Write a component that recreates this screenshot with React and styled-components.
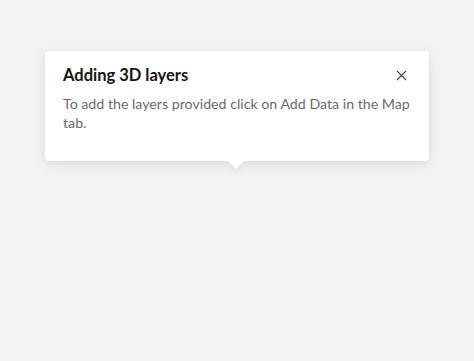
import React from "react";
import styled, { createGlobalStyle } from "styled-components";

const Global = createGlobalStyle`
  html, body { margin: 0; padding: 0; background: #f3f3f3; }
  body { font-family: "Lato", "Open Sans", sans-serif; }
  #root { min-height: 361px; }
`;

const Page = styled.div`
  min-height: 361px;
  box-sizing: border-box;
  display: flex;
  flex-direction: column;
  align-items: center;
  padding-top: 51px;
  background: #f3f3f3;
`;

const Popover = styled.div`
  position: relative;
  width: 384px;
  height: 110px;
  box-sizing: border-box;
  background: #ffffff;
  border-radius: 4px;
  box-shadow: 0 4px 16px rgba(0, 0, 0, 0.08), 0 2px 6px rgba(0, 0, 0, 0.04);
  padding: 14px 18px 0 18px;
  display: flex;
  flex-direction: column;
  gap: 9px;
  &::after {
    content: "";
    position: absolute;
    left: 50%;
    bottom: -6px;
    width: 10px;
    height: 10px;
    margin-left: -6px;
    background: #ffffff;
    transform: rotate(45deg);
    box-shadow: 3px 3px 5px rgba(0, 0, 0, 0.04);
  }
`;

const Header = styled.div`
  display: flex;
  align-items: center;
  justify-content: space-between;
`;

const Title = styled.h2`
  margin: 0;
  font-size: 16.5px;
  font-weight: 700;
  color: #151515;
  line-height: 20px;
`;

const Close = styled.button`
  border: none;
  background: none;
  padding: 0;
  width: 20px;
  height: 20px;
  display: flex;
  align-items: center;
  justify-content: center;
  color: #4a4a4a;
`;

const Body = styled.p`
  margin: 0;
  font-size: 14.2px;
  line-height: 19px;
  color: #6a6a6a;
`;

export default function App() {
  return (
    <>
      <Global />
      <Page>
        <Popover>
          <Header>
            <Title>Adding 3D layers</Title>
            <Close aria-label="Close">
              <svg width="11" height="11" viewBox="0 0 11 11">
                <path d="M1 1 L10 10 M10 1 L1 10" stroke="currentColor" strokeWidth="1.2" />
              </svg>
            </Close>
          </Header>
          <Body>To add the layers provided click on Add Data in the Map tab.</Body>
        </Popover>
      </Page>
    </>
  );
}
